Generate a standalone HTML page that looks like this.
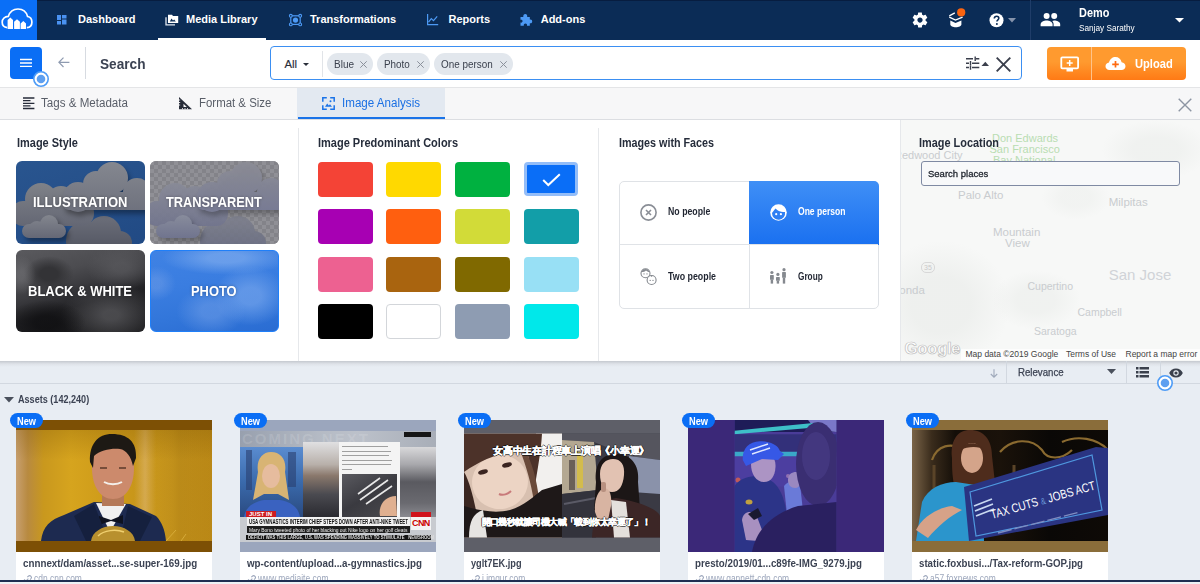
<!DOCTYPE html>
<html><head><meta charset="utf-8">
<style>
*{box-sizing:border-box;margin:0;padding:0}
html,body{width:1200px;height:584px;overflow:hidden}
body{position:relative;font-family:"Liberation Sans",sans-serif;background:#e8edf3;color:#3c4353}
.a{position:absolute}
.t{position:absolute;white-space:nowrap;line-height:1;transform-origin:0 0}
svg{position:absolute;overflow:visible}
.hdr{left:0;top:0;width:1200px;height:40px;background:#0b2c56;border-top:1px solid #071d40}
.nav{font-size:11px;font-weight:bold;color:#fff;top:13.7px}
.chip{position:absolute;top:53px;height:21.5px;border-radius:11px;background:#e2e7ed}
.tab{font-size:12.5px;color:#595e68;top:97.2px}
.ptitle{font-size:12px;font-weight:bold;color:#262d3b;top:137.3px}
.tile{position:absolute;width:129px;height:82.4px;border-radius:6px;overflow:hidden}
.tt{font-size:14.5px;font-weight:bold;color:#fff;text-shadow:0 0 3px rgba(0,0,0,.35)}
.sw{position:absolute;width:55px;height:35px;border-radius:4px}
.ft{font-size:10px;font-weight:bold;color:#1f2430;margin-top:.7px}
.card{position:absolute;top:420px;width:196px;height:164px;background:#fff;overflow:hidden}
.img{position:absolute;left:0;top:0;width:196px;height:131.7px;overflow:hidden}
.fn{font-size:10px;font-weight:bold;color:#3c4353;top:139.3px;left:7px}
.dom{font-size:10px;color:#9ea8bd;top:153.6px;left:18px;transform:scaleX(.845)}
.new{position:absolute;top:413.3px;width:33px;height:15px;border-radius:8px;background:#0a6ef5}
.newt{font-size:10px;font-weight:bold;color:#fff;top:417px}
.ml{font-size:11px;color:#c9cccf}
</style></head><body>

<!-- ============ HEADER ============ -->
<div class="a hdr"></div>
<div class="a" style="left:0;top:0;width:37px;height:40px;background:#0a6ff7"></div>
<svg style="left:0;top:0" width="37" height="40" viewBox="0 0 37 40">
<path d="M7.2 27.6 C4 27.2 2.2 24.8 2.2 22.2 C2.2 19 4.8 16.6 8.3 16.4 C9.8 11.8 13.6 9 18 9 C22.8 9 26.4 12.2 27.6 16.5 C30.2 16.9 31.9 19.4 31.9 22.2 C31.9 25.2 29.8 27.4 26.8 27.7" fill="none" stroke="#fff" stroke-width="1.7"/>
<path d="M7.6 28.9 V20 L10.3 17.5 L13 20 V28.9Z M14.1 28.9 V21.7 L17 19.2 L19.9 21.7 V28.9Z M20.6 28.9 V23.4 L23.3 21 L26 23.4 V28.9Z" fill="#fff"/>
</svg>

<svg style="left:57px;top:15px" width="10" height="10" viewBox="0 0 10 10"><path d="M0 0h4v5H0z M5 0h4.5v3.5H5z M0 6h4v3.5H0z M5 4.5h4.5v5H5z" fill="#4a92f2"/></svg>
<div class="t nav" style="left:78px">Dashboard</div>

<svg style="left:165px;top:14px" width="14" height="12" viewBox="0 0 14 12"><path d="M1 3.2 V10.8 H10" fill="none" stroke="#dfe5ee" stroke-width="1.3"/><path d="M3 0.8 H7 L8 2 H13.2 V9 H3Z" fill="#fff"/><path d="M4.8 7.6 L6.5 4.6 L8 6.6 L9.2 5.5 L10.8 7.6Z" fill="#0b2c56"/></svg>
<div class="t nav" style="left:186px">Media Library</div>
<div class="a" style="left:158px;top:38px;width:108px;height:2px;background:#fff"></div>

<svg style="left:289px;top:14px" width="13" height="12" viewBox="0 0 13 12"><rect x="1.8" y="1.8" width="9.4" height="8.6" fill="none" stroke="#4d9af5" stroke-width="1.2"/><circle cx="1.8" cy="1.8" r="1.4" fill="#0b2c56" stroke="#4d9af5" stroke-width="1.1"/><circle cx="11.2" cy="1.8" r="1.4" fill="#0b2c56" stroke="#4d9af5" stroke-width="1.1"/><circle cx="1.8" cy="10.4" r="1.4" fill="#0b2c56" stroke="#4d9af5" stroke-width="1.1"/><circle cx="11.2" cy="10.4" r="1.4" fill="#0b2c56" stroke="#4d9af5" stroke-width="1.1"/><circle cx="6.5" cy="6.1" r="2.6" fill="#4d9af5"/></svg>
<div class="t nav" style="left:310px">Transformations</div>

<svg style="left:427px;top:14px" width="12" height="12" viewBox="0 0 12 12"><path d="M0.6 0 V10.6 H11.2" fill="none" stroke="#4d9af5" stroke-width="1.2"/><path d="M1.5 8.2 L4.3 4.6 L6.5 6.6 L10.2 2.4" fill="none" stroke="#4d9af5" stroke-width="1.2"/></svg>
<div class="t nav" style="left:448.5px">Reports</div>

<svg style="left:520px;top:14px" width="12" height="12" viewBox="0 0 12 12"><path d="M0.5 3 H3.3 C3 1 4 0 5.3 0 C6.6 0 7.5 1 7.2 3 H9.8 V5.6 C11.6 5.3 12.2 6.4 12.2 7.4 C12.2 8.5 11.5 9.5 9.8 9.2 V11.8 H7 C7.3 10.3 6.5 9.6 5.5 9.6 C4.5 9.6 3.5 10.3 3.8 11.8 H0.5 V8.6 C2 8.9 2.6 8 2.6 7.1 C2.6 6.2 2 5.4 0.5 5.7Z" fill="#4d9af5"/></svg>
<div class="t nav" style="left:540.7px">Add-ons</div>

<!-- header right -->
<svg style="left:910.5px;top:10.5px" width="18" height="18" viewBox="0 0 24 24"><path fill="#fff" d="M19.4 13c.04-.3.06-.65.06-1s-.02-.7-.06-1l2.1-1.65c.2-.15.25-.42.12-.64l-2-3.46c-.12-.22-.39-.3-.61-.22l-2.49 1c-.52-.4-1.08-.73-1.69-.98l-.38-2.65C14.46 2.18 14.25 2 14 2h-4c-.25 0-.46.18-.49.42l-.38 2.65c-.61.25-1.17.59-1.69.98l-2.49-1c-.23-.09-.49 0-.61.22l-2 3.46c-.13.22-.07.49.12.64L4.57 11c-.04.3-.07.65-.07 1s.02.7.07 1l-2.11 1.65c-.19.15-.24.42-.12.64l2 3.46c.12.22.39.3.61.22l2.49-1c.52.4 1.08.73 1.69.98l.38 2.65c.03.24.24.42.49.42h4c.25 0 .46-.18.49-.42l.38-2.65c.61-.25 1.17-.59 1.69-.98l2.49 1c.23.09.49 0 .61-.22l2-3.46c.12-.22.07-.49-.12-.64L19.4 13zM12 15.5c-1.93 0-3.5-1.57-3.5-3.5s1.57-3.5 3.5-3.5 3.5 1.57 3.5 3.5-1.57 3.5-3.5 3.5z"/></svg>
<svg style="left:949px;top:12px" width="16" height="16" viewBox="0 0 16 16"><path d="M0.3 3.9L5.8 0.9M0.3 5.1L6.5 8.1L13.6 5.1" fill="none" stroke="#fff" stroke-width="1.3"/><path d="M1.3 8.6L6.5 11.1L12.4 8.6V12.6C12.4 14.1 9.8 15.3 6.9 15.3C4 15.3 1.3 14.1 1.3 12.6Z" fill="#fff"/><circle cx="12.2" cy="0.4" r="4.1" fill="#fb6410"/></svg>
<svg style="left:988.5px;top:13px" width="15" height="15" viewBox="0 0 15 15"><circle cx="7.5" cy="7.3" r="7" fill="#fff"/><path d="M5.3 5.6 C5.3 4.2 6.3 3.3 7.6 3.3 C8.9 3.3 9.8 4.2 9.8 5.3 C9.8 6.8 7.9 6.9 7.9 8.6" fill="none" stroke="#0b2c56" stroke-width="1.6"/><circle cx="7.9" cy="10.9" r="1" fill="#0b2c56"/></svg>
<svg style="left:1008px;top:18px" width="8" height="5" viewBox="0 0 8 5"><path d="M0 0H8L4 4.5Z" fill="#8593ab"/></svg>
<div class="a" style="left:1029.5px;top:0;width:1px;height:40px;background:#1f3d69"></div>
<svg style="left:1040px;top:13px" width="21" height="14" viewBox="0 0 21 14"><circle cx="6.6" cy="3.1" r="3" fill="#fff"/><circle cx="14.2" cy="3.1" r="3" fill="#fff"/><path d="M0.6 13.2 V11.4 C0.6 8.8 4 7.5 6.6 7.5 C9.2 7.5 12.6 8.8 12.6 11.4 V13.2Z" fill="#fff"/><path d="M13.6 13.2 V11.3 C13.6 10 13.1 9 12.3 8.1 C12.9 7.8 13.6 7.6 14.2 7.6 C16.7 7.6 20.2 8.8 20.2 11.3 V13.2Z" fill="#fff"/></svg>
<div class="t" style="left:1079px;top:7.1px;font-size:12px;font-weight:bold;color:#fff;transform:scaleX(.91)">Demo</div>
<div class="t" style="left:1078.7px;top:23.6px;font-size:9px;color:#fff;transform:scaleX(.913)">Sanjay Sarathy</div>
<svg style="left:1175px;top:18px" width="9" height="5" viewBox="0 0 9 5"><path d="M0 0H9L4.5 4.6Z" fill="#fff"/></svg>

<!-- ============ TOOLBAR ============ -->
<div class="a" style="left:0;top:40px;width:1200px;height:47px;background:#fff"></div>
<div class="a" style="left:10px;top:47px;width:32px;height:32px;border-radius:4px;background:#0a6ef5"></div>
<svg style="left:20px;top:58px" width="12" height="9" viewBox="0 0 12 9"><path d="M0 1.5H12M0 5H12M0 8.4H12" stroke="#fff" stroke-width="1.4"/></svg>
<svg style="left:33px;top:71px" width="16" height="16" viewBox="0 0 16 16"><circle cx="8" cy="8" r="7.2" fill="#fff" stroke="#4d9bf6" stroke-width="1.6"/><circle cx="8" cy="8" r="4.3" fill="#5d9ff0"/></svg>
<svg style="left:58px;top:57px" width="12" height="11" viewBox="0 0 12 11"><path d="M11.4 5.3H1M5.5 0.6L0.9 5.3L5.5 10" fill="none" stroke="#8e9ab0" stroke-width="1.2"/></svg>
<div class="a" style="left:85px;top:47px;width:1px;height:32px;background:#d7dbe1"></div>
<div class="t" style="left:99.5px;top:55.8px;font-size:15px;font-weight:bold;color:#3c4353;transform:scaleX(.909)">Search</div>

<div class="a" style="left:270px;top:46px;width:752px;height:34px;border:1.5px solid #3b8ff2;border-radius:4px;background:#fff"></div>
<div class="t" style="left:284.5px;top:58.6px;font-size:11.3px;color:#2a2f3a;-webkit-text-stroke:.15px #2a2f3a">All</div>
<svg style="left:303px;top:63px" width="6" height="3" viewBox="0 0 6 3"><path d="M0 0H6L3 3Z" fill="#2a2f3a"/></svg>
<div class="a" style="left:322px;top:51px;width:1px;height:26px;background:#e1e4e8"></div>
<div class="chip" style="left:327.3px;width:45.7px"></div>
<div class="t" style="left:333.5px;top:58.6px;font-size:10.5px;color:#3a404d;transform:scaleX(.952)">Blue</div>
<svg style="left:360px;top:61px" width="7" height="7" viewBox="0 0 7 7"><path d="M0.3 0.3L6.7 6.7M6.7 0.3L0.3 6.7" stroke="#8a909b" stroke-width="1"/></svg>
<div class="chip" style="left:377.3px;width:52.7px"></div>
<div class="t" style="left:384.2px;top:58.6px;font-size:10.5px;color:#3a404d;transform:scaleX(.94)">Photo</div>
<svg style="left:417px;top:61px" width="7" height="7" viewBox="0 0 7 7"><path d="M0.3 0.3L6.7 6.7M6.7 0.3L0.3 6.7" stroke="#8a909b" stroke-width="1"/></svg>
<div class="chip" style="left:434.2px;width:78.5px"></div>
<div class="t" style="left:440.8px;top:58.6px;font-size:10.5px;color:#3a404d;transform:scaleX(.942)">One person</div>
<svg style="left:500px;top:61px" width="7" height="7" viewBox="0 0 7 7"><path d="M0.3 0.3L6.7 6.7M6.7 0.3L0.3 6.7" stroke="#8a909b" stroke-width="1"/></svg>

<svg style="left:966px;top:56px" width="24" height="14" viewBox="0 0 24 14"><path d="M0 2.7H7M10 2.7H13.3M0 7.2H3M6 7.2H13.3M0 11.5H3M6 11.5H13.3" stroke="#3a3f4c" stroke-width="1.4"/><path d="M9.2 0.5V5M4.5 5V9.4M4.5 9.7V13.8" stroke="#3a3f4c" stroke-width="1.4"/><path d="M15.5 10H23L19.3 5.8Z" fill="#3a3f4c"/></svg>
<svg style="left:996px;top:56.5px" width="15" height="15" viewBox="0 0 15 15"><path d="M0.7 0.7L14.3 14.3M14.3 0.7L0.7 14.3" stroke="#3a3f4c" stroke-width="1.9"/></svg>

<div class="a" style="left:1047px;top:46.5px;width:139px;height:33.5px;border-radius:4px;background:linear-gradient(#ff9a2f 0%,#ff9a2f 45%,#ff7a15 100%)"></div>
<div class="a" style="left:1091px;top:46.5px;width:1px;height:33.5px;background:#ffc38a"></div>
<svg style="left:1060px;top:56px" width="20" height="16" viewBox="0 0 20 16"><rect x="1.3" y="1.3" width="16.8" height="11" rx="1" fill="none" stroke="#fff" stroke-width="1.8"/><path d="M6.5 13H13V15.5H6.5Z" fill="#fff"/><path d="M9.7 4V10M6.7 7H12.7" stroke="#fff" stroke-width="1.5"/></svg>
<svg style="left:1105px;top:56px" width="21" height="15" viewBox="0 0 21 15"><path d="M4.5 14 C2 14 0.5 12.3 0.5 10.3 C0.5 8.3 2 6.8 4 6.6 C4.8 3 7.5 1 10.5 1 C13.5 1 16 3 16.6 6.2 C18.8 6.4 20.5 8 20.5 10.2 C20.5 12.4 18.8 14 16.5 14Z" fill="#fff"/><path d="M10.5 5V11.6M7.2 8.3H13.8" stroke="#ff6a10" stroke-width="1.7"/></svg>
<div class="t" style="left:1134.6px;top:58px;font-size:12px;font-weight:bold;color:#fff;transform:scaleX(.927)">Upload</div>

<!-- ============ TABS ============ -->
<div class="a" style="left:0;top:87px;width:1200px;height:33px;background:#f7f7f8;border-top:1px solid #e4e5e7;border-bottom:1px solid #dcdee2"></div>
<svg style="left:22.5px;top:97px" width="12" height="13" viewBox="0 0 12 13"><path d="M0 1H11.4M0 3.6H7.5M0 6.3H11.4M0 8.9H7.5M0 11.5H11.4" stroke="#262b38" stroke-width="1.3"/></svg>
<div class="t tab" style="left:41px;transform:scaleX(.927)">Tags &amp; Metadata</div>
<svg style="left:179px;top:97px" width="13" height="13" viewBox="0 0 13 13"><path d="M0 0 V12.3 H13Z" fill="#262b38"/><path d="M4.5 6.8 V10 H7.8Z" fill="#f7f7f8"/><path d="M0 3H1.2M0 5.5H1.2M0 8H1.2M3.5 12.3V11.1M6 12.3V11.1M8.5 12.3V11.1" stroke="#f7f7f8" stroke-width=".9"/></svg>
<div class="t tab" style="left:199px;transform:scaleX(.914)">Format &amp; Size</div>
<div class="a" style="left:297px;top:88px;width:148px;height:31px;background:#e3e9f1"></div>
<div class="a" style="left:297.5px;top:117.2px;width:147.5px;height:1.8px;background:#1a73e8"></div>
<svg style="left:322px;top:97px" width="13" height="13" viewBox="0 0 13 13"><path d="M0.8 4.8V0.8H4.8M8.2 0.8H12.2V4.8M12.2 8.2V12.2H8.2M4.8 12.2H0.8V8.2" fill="none" stroke="#1a73e8" stroke-width="1.5"/><path d="M3 9.7L5.2 6.6L6.8 8.4L8 7.2L10 9.7Z" fill="#1a73e8"/><circle cx="8.5" cy="4.3" r="1" fill="#1a73e8"/></svg>
<div class="t tab" style="left:342px;color:#1a6fe3;transform:scaleX(.928)">Image Analysis</div>
<svg style="left:1178px;top:98px" width="14" height="14" viewBox="0 0 14 14"><path d="M0.7 0.7L13.3 13.3M13.3 0.7L0.7 13.3" stroke="#8d95a3" stroke-width="1.4"/></svg>

<!-- ============ PANEL ============ -->
<div class="a" style="left:0;top:361px;width:1200px;height:6px;background:linear-gradient(#c5c9cf,#dfe3e9 50%,#e8edf3)"></div>
<div class="a" style="left:0;top:120px;width:1200px;height:241px;background:#fff"></div>
<div class="a" style="left:298px;top:128px;width:1px;height:233px;background:#e6e8eb"></div>
<div class="a" style="left:598px;top:128px;width:1px;height:233px;background:#e6e8eb"></div>

<div class="t ptitle" style="left:17.2px;transform:scaleX(.914)">Image Style</div>
<div class="t ptitle" style="left:317.7px;transform:scaleX(.917)">Image Predominant Colors</div>
<div class="t ptitle" style="left:618.5px;transform:scaleX(.896)">Images with Faces</div>

<svg width="0" height="0" style="left:0;top:0"><defs>
<g id="clA"><circle cx="62" cy="36" r="15"/><circle cx="80" cy="23" r="13"/><circle cx="96" cy="17" r="16"/><circle cx="121" cy="31" r="14"/><rect x="47" y="31" width="90" height="18" rx="6"/></g>
<g id="clB"><circle cx="25" cy="38" r="16"/><circle cx="45" cy="39" r="14"/><rect x="-5" y="40" width="83" height="25" rx="12"/></g>
<g id="clC"><circle cx="21" cy="68" r="8"/><circle cx="33" cy="63" r="9"/><rect x="6" y="63" width="44" height="14" rx="7"/></g>
<g id="clD"><circle cx="70" cy="80" r="20"/><circle cx="88" cy="72" r="17"/><circle cx="104" cy="82" r="12"/></g>
<filter id="blr" x="-20%" y="-20%" width="140%" height="140%"><feGaussianBlur stdDeviation="2.5"/></filter>
<linearGradient id="gA" gradientUnits="userSpaceOnUse" x1="0" y1="2" x2="0" y2="49"><stop offset="0" stop-color="#84878f"/><stop offset="1" stop-color="#6f727e"/></linearGradient>
<linearGradient id="gB" gradientUnits="userSpaceOnUse" x1="0" y1="20" x2="0" y2="65"><stop offset="0" stop-color="#808389"/><stop offset="1" stop-color="#646774"/></linearGradient>
<linearGradient id="gC" gradientUnits="userSpaceOnUse" x1="0" y1="54" x2="0" y2="77"><stop offset="0" stop-color="#83868e"/><stop offset="1" stop-color="#656876"/></linearGradient>
<linearGradient id="gD" gradientUnits="userSpaceOnUse" x1="0" y1="52" x2="0" y2="83"><stop offset="0" stop-color="#6e717c"/><stop offset="1" stop-color="#575a66"/></linearGradient>
<linearGradient id="tA" gradientUnits="userSpaceOnUse" x1="0" y1="2" x2="0" y2="49"><stop offset="0" stop-color="#8c8d96"/><stop offset="1" stop-color="#7a7d96"/></linearGradient>
<linearGradient id="tB" gradientUnits="userSpaceOnUse" x1="0" y1="20" x2="0" y2="65"><stop offset="0" stop-color="#8a8c98"/><stop offset="1" stop-color="#72758e"/></linearGradient>
<linearGradient id="tC" gradientUnits="userSpaceOnUse" x1="0" y1="54" x2="0" y2="77"><stop offset="0" stop-color="#888c9c"/><stop offset="1" stop-color="#70748e"/></linearGradient>
<linearGradient id="tD" gradientUnits="userSpaceOnUse" x1="0" y1="52" x2="0" y2="83"><stop offset="0" stop-color="#80828e"/><stop offset="1" stop-color="#6c7084"/></linearGradient>
<pattern id="chk" width="8" height="8" patternUnits="userSpaceOnUse"><rect width="8" height="8" fill="#838389"/><rect width="4" height="4" fill="#909096"/><rect x="4" y="4" width="4" height="4" fill="#909096"/></pattern>
</defs></svg>

<div class="tile" style="left:16px;top:161.3px;background:linear-gradient(160deg,#29558f,#214a84)"><svg style="left:0;top:0" width="129" height="83">
 <use href="#clD" fill="url(#gD)"/>
 <use href="#clB" fill="url(#gB)"/>
 <use href="#clC" fill="#000" opacity=".35" filter="url(#blr)" transform="translate(3,4)"/>
 <use href="#clC" fill="url(#gC)"/>
 <use href="#clA" fill="#000" opacity=".35" filter="url(#blr)" transform="translate(2,4)"/>
 <use href="#clA" fill="url(#gA)"/>
</svg></div>
<div class="tile" style="left:149.5px;top:161.3px;background:#939399"><svg style="left:0;top:0" width="129" height="83"><rect width="129" height="83" fill="url(#chk)"/>
 <use href="#clD" fill="url(#tD)" opacity=".9"/>
 <use href="#clB" fill="url(#tB)" opacity=".95"/>
 <use href="#clC" fill="#000" opacity=".25" filter="url(#blr)" transform="translate(3,4)"/>
 <use href="#clC" fill="url(#tC)"/>
 <use href="#clA" fill="#000" opacity=".25" filter="url(#blr)" transform="translate(2,4)"/>
 <use href="#clA" fill="url(#tA)" opacity=".95"/>
</svg></div>
<div class="tile" style="left:16px;top:250px;height:81.7px;background:linear-gradient(165deg,#5a5a5e 0%,#4c4c50 28%,#3a3a3e 45%,#222225 62%,#161618 100%)">
 <div class="a" style="left:40px;top:30px;width:110px;height:70px;border-radius:50%;background:radial-gradient(rgba(110,110,114,.55) 10%,rgba(100,100,104,0) 65%)"></div>
 <div class="a" style="left:70px;top:-5px;width:70px;height:45px;border-radius:50%;background:radial-gradient(rgba(95,95,99,.6) 15%,rgba(95,95,99,0) 70%)"></div>
 <div class="a" style="left:8px;top:6px;width:50px;height:36px;border-radius:50%;background:radial-gradient(#333336 25%,rgba(51,51,54,0) 70%)"></div>
 <div class="a" style="left:-10px;top:5px;width:30px;height:40px;border-radius:50%;background:radial-gradient(rgba(120,120,124,.5) 15%,rgba(120,120,124,0) 70%)"></div>
 <div class="a" style="left:-10px;top:50px;width:80px;height:45px;border-radius:50%;background:radial-gradient(rgba(10,10,12,.6) 20%,rgba(10,10,12,0) 70%)"></div>
</div>
<div class="tile" style="left:149.5px;top:250px;height:81.7px;background:linear-gradient(170deg,#3f82e4 0%,#3a7de0 40%,#3276da 70%,#2a6cd2 100%);border:1.5px solid #1f7ff9">
 <div class="a" style="left:10px;top:-10px;width:130px;height:34px;border-radius:50%;background:radial-gradient(rgba(135,178,240,.6) 20%,rgba(135,178,240,0) 70%)"></div>
 <div class="a" style="left:62px;top:15px;width:75px;height:60px;border-radius:50%;background:radial-gradient(rgba(125,170,238,.6) 20%,rgba(125,170,238,0) 70%)"></div>
 <div class="a" style="left:25px;top:35px;width:70px;height:50px;border-radius:50%;background:radial-gradient(rgba(115,160,232,.5) 20%,rgba(115,160,232,0) 70%)"></div>
 <div class="a" style="left:-15px;top:15px;width:40px;height:35px;border-radius:50%;background:radial-gradient(rgba(115,160,232,.45) 20%,rgba(115,160,232,0) 70%)"></div>
</div>
<div class="t tt" style="left:32.8px;top:195.3px;transform:scaleX(.897)">ILLUSTRATION</div>
<div class="t tt" style="left:166px;top:195.3px;transform:scaleX(.883)">TRANSPARENT</div>
<div class="t tt" style="left:28.4px;top:284px;transform:scaleX(.897)">BLACK &amp; WHITE</div>
<div class="t tt" style="left:191.2px;top:284px;transform:scaleX(.889)">PHOTO</div>

<!-- colors -->
<div class="sw" style="left:317.5px;top:161.5px;background:#f44336"></div>
<div class="sw" style="left:386px;top:161.5px;background:#ffd900"></div>
<div class="sw" style="left:455px;top:161.5px;background:#00b140"></div>
<div class="sw" style="left:524.2px;top:161.8px;width:53.7px;height:34.7px;background:#0a6ef7;border:3px solid #93bdf8;border-radius:4px"></div>
<svg style="left:542px;top:172.5px" width="19" height="14" viewBox="0 0 19 14"><path d="M1.2 7 L6.3 12 L17.8 1.2" fill="none" stroke="#fff" stroke-width="2"/></svg>
<div class="sw" style="left:317.5px;top:209px;background:#a700b3"></div>
<div class="sw" style="left:386px;top:209px;background:#ff5f0f"></div>
<div class="sw" style="left:455px;top:209px;background:#d2db38"></div>
<div class="sw" style="left:524px;top:209px;background:#129ea8"></div>
<div class="sw" style="left:317.5px;top:257px;background:#ed6191"></div>
<div class="sw" style="left:386px;top:257px;background:#a9640f"></div>
<div class="sw" style="left:455px;top:257px;background:#806900"></div>
<div class="sw" style="left:524px;top:257px;background:#98e0f5"></div>
<div class="sw" style="left:317.5px;top:304px;background:#000"></div>
<div class="sw" style="left:386px;top:304px;background:#fff;border:1px solid #d3d6da"></div>
<div class="sw" style="left:455px;top:304px;background:#8e9cb2"></div>
<div class="sw" style="left:524px;top:304px;background:#00e8ea"></div>

<!-- faces -->
<div class="a" style="left:618.5px;top:180.5px;width:260.5px;height:128px;border:1px solid #dfe2e6;border-radius:5px;background:#fff"></div>
<div class="a" style="left:749.4px;top:180.5px;width:129.6px;height:64px;border-radius:0 5px 0 0;background:linear-gradient(#3f8ff6,#1a70f0)"></div>
<div class="a" style="left:749px;top:244px;width:1px;height:64.5px;background:#e0e3e7"></div>
<div class="a" style="left:619px;top:244px;width:259px;height:1px;background:#e0e3e7"></div>
<svg style="left:639.5px;top:204px" width="18" height="18" viewBox="0 0 18 18"><circle cx="8.5" cy="8.5" r="7.6" fill="none" stroke="#8a8e96" stroke-width="1.6"/><path d="M6 6L11 11M11 6L6 11" stroke="#8a8e96" stroke-width="1.6"/></svg>
<div class="t ft" style="left:668.4px;top:206.3px;transform:scaleX(.877)">No people</div>
<svg style="left:769.5px;top:204px" width="18" height="18" viewBox="0 0 18 18"><circle cx="8.5" cy="8.5" r="8.3" fill="#fff"/><path d="M2 9 L5.4 4.4 L7.9 6.4 C10 7.5 12.4 7.9 15 8 A6.55 6.55 0 1 1 2 9Z" fill="#2f7ff3"/><circle cx="6.2" cy="10.2" r="1.1" fill="#fff"/><circle cx="10.9" cy="10.2" r="1.1" fill="#fff"/></svg>
<div class="t ft" style="left:798.3px;top:206.3px;color:#fff;transform:scaleX(.855)">One person</div>
<svg style="left:639.5px;top:268px" width="18" height="18" viewBox="0 0 18 18"><circle cx="5.5" cy="5.3" r="4.5" fill="#fff" stroke="#85898f" stroke-width="1.1"/><path d="M1.6 4 C2.5 1.8 4 1 5.5 1 C7.5 1 9 2 9.6 4 C8 3.8 6.8 3.2 6 2.4 C5 3.4 3.4 4 1.6 4Z" fill="#85898f"/><path d="M4 5.2V6.6M7 5.2V6.6" stroke="#85898f" stroke-width=".9"/><circle cx="11.6" cy="12" r="4.5" fill="#fff" stroke="#85898f" stroke-width="1.1"/><circle cx="10.2" cy="12.4" r=".65" fill="#85898f"/><circle cx="13" cy="12.4" r=".65" fill="#85898f"/><path d="M11.6 7.6V9" stroke="#85898f" stroke-width=".8"/></svg>
<div class="t ft" style="left:667.6px;top:271px;transform:scaleX(.885)">Two people</div>
<svg style="left:769px;top:268px" width="18" height="17" viewBox="0 0 18 17"><g fill="#85898f"><circle cx="2.9" cy="4.5" r="1.6"/><rect x="1" y="7" width="3.8" height="4.8" rx=".6"/><rect x="1.7" y="11.5" width="2.4" height="4.1"/><circle cx="8.9" cy="6.4" r="1.6"/><rect x="7" y="9" width="3.8" height="3.8" rx=".6"/><rect x="7.7" y="12.6" width="2.4" height="3"/><circle cx="15" cy="1.7" r="1.6"/><rect x="13.1" y="4" width="3.8" height="5.8" rx=".6"/><rect x="13.8" y="9.5" width="2.4" height="6.1"/></g></svg>
<div class="t ft" style="left:798.3px;top:271px;transform:scaleX(.823)">Group</div>

<!-- map -->
<div class="a" style="left:901px;top:120px;width:299px;height:241px;background:#f7f8f7;overflow:hidden">
 <div class="a" style="left:-30px;top:120px;width:140px;height:130px;border-radius:45%;background:radial-gradient(rgba(236,238,236,.8) 30%,rgba(236,238,236,0) 70%)"></div>
 <div class="a" style="left:90px;top:150px;width:90px;height:60px;border-radius:45%;background:radial-gradient(rgba(237,239,237,.7) 30%,rgba(237,239,237,0) 70%)"></div>
 <div class="a" style="left:200px;top:0;width:110px;height:60px;border-radius:45%;background:radial-gradient(rgba(237,239,237,.7) 30%,rgba(237,239,237,0) 70%)"></div>
 <div class="a" style="left:140px;top:55px;width:70px;height:45px;border-radius:45%;background:radial-gradient(rgba(238,240,238,.6) 30%,rgba(238,240,238,0) 70%)"></div>
 <div class="t ml" style="left:91px;top:13px;color:#b9ddb2;font-size:11px">Don Edwards</div>
 <div class="t ml" style="left:88.5px;top:24px;color:#b9ddb2;font-size:11px">San Francisco</div>
 <div class="t ml" style="left:92px;top:35px;color:#b9ddb2;font-size:11px">Bay National</div>
 <div class="t ml" style="left:-7px;top:30px;font-size:11px">Redwood City</div>
 <div class="t ml" style="left:57px;top:69.5px;font-size:11.5px">Palo Alto</div>
 <div class="t ml" style="left:207.7px;top:76.5px;font-size:11.5px">Milpitas</div>
 <div class="t ml" style="left:92px;top:106.5px;font-size:11.5px">Mountain</div>
 <div class="t ml" style="left:104px;top:118px;font-size:11.5px">View</div>
 <div class="a" style="left:20px;top:142px;width:14px;height:11px;border-radius:5px;border:1px solid #d8d8d8;font-size:7px;color:#c9c9c9;text-align:center;line-height:9px">35</div>
 <div class="t ml" style="left:-10px;top:164.5px;font-size:11.5px">Honda</div>
 <div class="t ml" style="left:207.7px;top:147px;font-size:15px;color:#d0d3d7">San Jose</div>
 <div class="t ml" style="left:126.5px;top:160.5px;font-size:10.5px">Cupertino</div>
 <div class="t ml" style="left:176.5px;top:187px;font-size:10.5px">Campbell</div>
 <div class="t ml" style="left:133px;top:206px;font-size:10.5px">Saratoga</div>
</div>
<div class="a" style="left:900px;top:120px;width:1px;height:241px;background:#e6e8eb"></div>
<div class="t ptitle" style="left:919.4px;transform:scaleX(.909)">Image Location</div>
<div class="a" style="left:920.5px;top:161.2px;width:259px;height:24.5px;border:1px solid #7f8aa3;border-radius:3px;background:#f8f9fa"></div>
<div class="t" style="left:927.5px;top:169.3px;font-size:9.8px;color:#1e232c;-webkit-text-stroke:.3px #1e232c;transform:scaleX(.97)">Search places</div>
<div class="t" style="left:904.5px;top:339.5px;font-size:17px;font-weight:bold;color:#fff;-webkit-text-stroke:.7px #bdbdbd;letter-spacing:-.5px">Google</div>
<div class="a" style="left:961px;top:349px;width:239px;height:11px;background:rgba(255,255,255,.75)"></div>
<div class="t" style="left:965.5px;top:350.2px;font-size:8.5px;color:#444">Map data ©2019 Google</div>
<div class="t" style="left:1066px;top:350.2px;font-size:8.5px;color:#444">Terms of Use</div>
<div class="t" style="left:1125.5px;top:350.2px;font-size:8.5px;color:#444">Report a map error</div>

<!-- ============ SORT BAR ============ -->
<div class="a" style="left:0;top:383px;width:1200px;height:1px;background:#d2d8e0"></div>
<svg style="left:989.5px;top:369px" width="8" height="9" viewBox="0 0 8 9"><path d="M4 0.3V8.2M0.8 5L4 8.2L7.2 5" fill="none" stroke="#9fa9ba" stroke-width="1.1"/></svg>
<div class="a" style="left:1005.5px;top:361px;width:1px;height:22px;background:#d2d8e0"></div>
<div class="t" style="left:1018px;top:367.5px;font-size:10px;color:#3c4353;-webkit-text-stroke:.25px #3c4353;transform:scaleX(.965)">Relevance</div>
<svg style="left:1107px;top:369px" width="9" height="6" viewBox="0 0 9 6"><path d="M0 0H9L4.5 5Z" fill="#4a505c"/></svg>
<div class="a" style="left:1125.5px;top:361px;width:1px;height:22px;background:#d2d8e0"></div>
<svg style="left:1136px;top:367px" width="13" height="11" viewBox="0 0 13 11"><path d="M0 0h2.5v2.5H0zM3.5 0H13v2.5H3.5zM0 4h2.5v2.5H0zM3.5 4H13v2.5H3.5zM0 8h2.5v2.5H0zM3.5 8H13v2.5H3.5z" fill="#3a404c"/></svg>
<div class="a" style="left:1159.5px;top:361px;width:1px;height:22px;background:#d2d8e0"></div>
<svg style="left:1169px;top:368px" width="14" height="10" viewBox="0 0 14 10"><path d="M7 0.5C3.8 0.5 1.2 2.5 0.2 5C1.2 7.5 3.8 9.5 7 9.5C10.2 9.5 12.8 7.5 13.8 5C12.8 2.5 10.2 0.5 7 0.5Z" fill="#3a404c"/><circle cx="7" cy="5" r="2.7" fill="#e8edf3"/><circle cx="7" cy="5" r="1.6" fill="#3a404c"/></svg>
<svg style="left:1157px;top:375px" width="16" height="16" viewBox="0 0 16 16"><circle cx="8" cy="8" r="7.2" fill="#fff" stroke="#4d9bf6" stroke-width="1.6"/><circle cx="8" cy="8" r="4.3" fill="#5d9ff0"/></svg>

<svg style="left:4px;top:397px" width="10" height="6" viewBox="0 0 10 6"><path d="M0 0H10L5 5.5Z" fill="#4a505c"/></svg>
<div class="t" style="left:17.8px;top:394.1px;font-size:10.5px;font-weight:bold;color:#3c4353;transform:scaleX(.865)">Assets (142,240)</div>

<!-- ============ CARDS ============ -->
<!-- card 1 -->
<div class="card" style="left:16px">
 <div class="img" style="background:#7d5005">
  <div class="a" style="left:0;top:10px;width:196px;height:111px;background:linear-gradient(90deg,#c8a070 0%,#b88a40 6%,#c9981e 14%,#d6a41e 28%,#cf9c1a 45%,#c8961a 62%,#d2a020 80%,#c08e18 100%)"></div>
  <div class="a" style="left:118px;top:10px;width:22px;height:111px;background:linear-gradient(90deg,rgba(225,190,140,0),rgba(225,190,140,.45),rgba(225,190,140,0))"></div>
  <div class="a" style="left:130px;top:10px;width:66px;height:111px;background:linear-gradient(90deg,rgba(140,95,10,0),rgba(140,95,10,.3) 50%,rgba(150,100,10,.15))"></div><div class="a" style="left:0;top:10px;width:196px;height:30px;background:linear-gradient(rgba(120,80,0,.25),rgba(120,80,0,0))"></div>
  <svg style="left:0;top:0" width="196" height="132" viewBox="0 0 196 132">
   <path d="M25 121 C27 106 34 100 48 95 L78 82 L114 84 L140 96 C146 102 149 110 150 121Z" fill="#1d2a50"/>
   <path d="M80 83 L94 112 L110 84Z" fill="#f0f0f0"/>
   <path d="M83 96 L95 100 L107 95 L107 104 L95 101 L83 105Z" fill="#0e1220"/>
   <path d="M58 96 L78 84 L92 120 L70 121Z" fill="#15203e"/>
   <path d="M136 97 L112 86 L104 121 L124 121Z" fill="#15203e"/>
   <rect x="86" y="70" width="22" height="16" fill="#b47858"/>
   <path d="M76 48 C76 32 84 24 97 24 C110 24 118 32 118 48 C118 66 110 79 97 79 C84 79 76 66 76 48Z" fill="#cc8a6c"/>
   <path d="M74 42 C73 24 82 14 96 14 C112 14 121 22 120 38 L117 46 C115 36 110 30 104 29 C96 28 84 30 78 36 L77 48Z" fill="#1d1914"/>
   <path d="M88 62 C93 65 101 65 106 62" fill="none" stroke="#f4f0ea" stroke-width="2"/><path d="M84 48h7M103 48h7" stroke="#5a3a2a" stroke-width="1.5"/>
   <path d="M75 121 C76 112 86 106 97 106 C108 106 118 112 119 121Z" fill="#b8902e"/><path d="M82 116 C88 110 100 109 108 112" stroke="#f0d070" stroke-width="1.5" fill="none"/><path d="M150 121 L160 110 M165 121 L170 114" stroke="#e8c050" stroke-width="1" opacity=".6"/>
  </svg>
 </div>
 <div class="t fn" style="transform:scaleX(.979)">cnnnext/dam/asset...se-super-169.jpg</div>
 <div class="t dom">cdn.cnn.com</div><svg style="left:7px;top:154.8px" width="9" height="9" viewBox="0 0 9 9"><path d="M3.6 5.4L5.4 3.6M4.3 2.2L5.2 1.3C6 .5 7.2 .5 8 1.3C8.6 2 8.6 3 8 3.7L7 4.7M4.7 6.8L3.8 7.7C3 8.5 1.8 8.5 1 7.7C.4 7 .4 6 1 5.3L2 4.3" fill="none" stroke="#9ea8bd" stroke-width="1.1"/></svg>
</div>
<!-- card 2 -->
<div class="card" style="left:240px">
 <div class="img" style="background:#9ba6bd">
  <div class="a" style="left:0;top:10.5px;width:196px;height:111px;background:#c8cbd0"></div>
  <div class="a" style="left:0;top:10.5px;width:196px;height:17px;background:linear-gradient(90deg,#98a0ae,#b4bac4 40%,#bcc1ca 60%,#a8aeb8)"></div>
  <div class="t" style="left:2px;top:11px;font-size:15px;font-weight:bold;color:rgba(255,255,255,.13);letter-spacing:2px">COMING NEXT</div>
  <div class="a" style="left:163.5px;top:12px;width:27px;height:5px;background:#161616"></div>
  <div class="a" style="left:0;top:27px;width:63px;height:70px;background:linear-gradient(#5a8cd0 0%,#3a6aac 50%,#2a4a80 100%)"></div>
  <div class="a" style="left:6px;top:30px;width:6px;height:40px;background:#2a4070;opacity:.6"></div>
  <div class="a" style="left:48px;top:32px;width:8px;height:35px;background:#2a4070;opacity:.6"></div>
  <div class="a" style="left:63px;top:22px;width:36px;height:75px;background:linear-gradient(#e0e0e2 0%,#b8b0aa 30%,#8a786c 45%,#4a4a50 70%,#2a2a30 100%)"></div>
  <div class="a" style="left:99px;top:22px;width:61px;height:75px;background:#f4f4f4"></div>
  <div class="a" style="left:102px;top:26px;width:46px;height:1.3px;background:#a0a0a0"></div>
  <div class="a" style="left:102px;top:30.5px;width:49px;height:1.3px;background:#a0a0a0"></div>
  <div class="a" style="left:102px;top:35px;width:47px;height:1.3px;background:#a0a0a0"></div>
  <div class="a" style="left:102px;top:39.5px;width:50px;height:1.3px;background:#a0a0a0"></div>
  <div class="a" style="left:102px;top:44px;width:49px;height:1.3px;background:#a0a0a0"></div>
  <div class="a" style="left:102px;top:48.5px;width:10px;height:1.3px;background:#a0a0a0"></div>
  <div class="a" style="left:102px;top:54px;width:55px;height:43px;background:linear-gradient(150deg,#5a5a60,#3a3a40 50%,#4a4a4e)"></div>
  <div class="a" style="left:160px;top:27px;width:36px;height:70px;background:linear-gradient(#d8d8da 0%,#a8a8ac 25%,#5a5a60 50%,#6a6a70 80%,#8a8a90 100%)"></div>
  <svg style="left:0;top:0" width="196" height="132" viewBox="0 0 196 132">
   <path d="M4 97 C6 86 14 82 24 80 L40 80 C50 82 58 86 60 97Z" fill="#3a62c0"/>
   <path d="M18 52 C16 40 22 32 31 32 C41 32 47 40 45 52 L49 80 L38 74 L24 74 L13 80Z" fill="#d8b474"/>
   <ellipse cx="31" cy="56" rx="9" ry="12" fill="#e6bc9e"/>
   <path d="M120 80 L148 60 M126 84 L152 66 M118 74 L140 58" stroke="#e8e8e8" stroke-width="1.6"/>
   <path d="M140 96 C138 84 146 76 156 76 L157 96Z" fill="#e0b090"/>
  </svg>
  <div class="a" style="left:6px;top:91px;width:30px;height:6px;background:#cc1c22"></div>
  <div class="t" style="left:9px;top:91px;font-size:6px;font-weight:bold;color:#fff">JUST IN</div>
  <div class="a" style="left:7px;top:96.5px;width:163px;height:9.5px;background:#f2f2f2"></div>
  <div class="t" style="left:9px;top:98px;font-size:7px;font-weight:bold;color:#111;transform:scaleX(.625)">USA GYMNASTICS INTERIM CHIEF STEPS DOWN AFTER ANTI-NIKE TWEET</div>
  <div class="a" style="left:7px;top:106px;width:163px;height:7px;background:#1e1e1e"></div>
  <div class="t" style="left:9px;top:106.5px;font-size:6px;color:#eee;transform:scaleX(.82)">Mary Bono tweeted photo of her blacking out Nike logo on her golf cleats</div>
  <div class="a" style="left:5.5px;top:114.5px;width:185px;height:5.5px;background:#141414"></div>
  <div class="t" style="left:8px;top:114.8px;font-size:5px;font-weight:bold;color:#ddd;transform:scaleX(.85)">DEFICIT WAS THIS LARGE, U.S. WAS SPENDING MASSIVELY TO STIMULATE &nbsp; NEWSROOM</div>
  <div class="a" style="left:170.5px;top:92px;width:20px;height:4.5px;background:#d0141c"></div>
  <div class="a" style="left:170.5px;top:96.5px;width:20px;height:13px;background:#f4f4f4"></div>
  <div class="t" style="left:172px;top:98.5px;font-size:9px;font-weight:bold;color:#cc0000;letter-spacing:-.6px">CNN</div>
 </div>
 <div class="t fn" style="transform:scaleX(.978)">wp-content/upload...a-gymnastics.jpg</div>
 <div class="t dom">www.mediaite.com</div><svg style="left:7px;top:154.8px" width="9" height="9" viewBox="0 0 9 9"><path d="M3.6 5.4L5.4 3.6M4.3 2.2L5.2 1.3C6 .5 7.2 .5 8 1.3C8.6 2 8.6 3 8 3.7L7 4.7M4.7 6.8L3.8 7.7C3 8.5 1.8 8.5 1 7.7C.4 7 .4 6 1 5.3L2 4.3" fill="none" stroke="#9ea8bd" stroke-width="1.1"/></svg>
</div>
<!-- card 3 -->
<div class="card" style="left:464px">
 <div class="img" style="background:#5e5f68">
  <div class="a" style="left:0;top:13.7px;width:98px;height:103.8px;background:#e8d4c8"></div>
  <svg style="left:0;top:0" width="196" height="132" viewBox="0 0 196 132">
   <rect x="0" y="13.7" width="98" height="103.8" fill="#d8c0b0"/>
   <rect x="72" y="13.7" width="26" height="60" fill="#f2f0ee"/>
   <ellipse cx="36" cy="62" rx="28" ry="27" fill="#ecd4c4" transform="rotate(-12 36 62)"/>
   <path d="M0 13.7 H78 C77 32 73 52 71 66 C67 50 65 38 62 28 C45 30 20 38 0 52Z" fill="#4c3229"/>
   <path d="M0 52 C6 62 10 80 14 100 L0 112Z" fill="#3a2620"/>
   <path d="M60 28 C68 42 73 60 75 80 L70 82 C67 62 62 46 56 30Z" fill="#6a4a3a"/>
   <ellipse cx="19" cy="52" rx="5" ry="2.3" fill="#3a2420" transform="rotate(-14 19 52)"/>
   <ellipse cx="43" cy="45" rx="5" ry="2.3" fill="#3a2420" transform="rotate(-14 43 45)"/>
   <path d="M35 74 C39 76 44 74 47 71" stroke="#c87a7a" stroke-width="2" fill="none"/>
   <path d="M0 117.5 V86 C14 90 30 94 46 90 C60 86 70 76 78 70 L98 64 V117.5Z" fill="#1e1818"/>
   <path d="M5 117.5 C5 102 9 93 19 90 L23 117.5Z" fill="#e6e4e2"/>
   <rect x="98" y="13.7" width="98" height="103.8" fill="#3a3a44"/>
   <path d="M98 13.7 H196 V40 L165 36 L130 22 L98 20Z" fill="#55555e"/>
   <path d="M98 20 L130 22 L134 70 L98 74Z" fill="#b4a892"/>
   <rect x="113" y="32" width="6" height="36" fill="#d8c040" opacity=".85"/>
   <rect x="105" y="40" width="6" height="30" fill="#6a6058"/>
   <path d="M165 36 L196 40 V74 L168 72Z" fill="#8a92aa"/>
   <path d="M98 74 L134 70 L132 117.5 H98Z" fill="#33333c"/>
   <path d="M100 84 L132 78" stroke="#5a5a66" stroke-width="2"/>
   <path d="M132 62 C130 44 138 34 152 34 C166 34 176 44 174 62 L176 90 L130 90Z" fill="#1c1616"/>
   <path d="M136 54 C136 44 142 39 149 39 C157 39 161 45 160 55 C159 66 155 72 148 72 C140 72 136 64 136 54Z" fill="#e2c2b2"/>
   <path d="M128 117.5 C129 96 138 80 152 78 C168 80 194 88 196 96 V117.5Z" fill="#3c2626"/>
   <path d="M147 80 L150 117.5 L166 117.5 L162 82Z" fill="#e4e0dc"/>
   <path d="M131 92 C130 80 134 70 140 68 C146 68 148 76 147 86 L144 100 L134 100Z" fill="#d8b4a2"/>
   <rect x="137" y="62" width="5" height="10" rx="2" fill="#b89080"/>
  </svg>
  <div class="t" style="left:29px;top:25.5px;font-size:9.5px;font-weight:bold;color:#fff;-webkit-text-stroke:.45px #fff;text-shadow:1px 0 0 #111,-1px 0 0 #111,0 1px 0 #111,0 -1px 0 #111;letter-spacing:-.25px">女高中生在計程車上演唱《小幸運》</div>
  <div class="t" style="left:17.5px;top:98px;font-size:8.6px;font-weight:bold;color:#fff;-webkit-text-stroke:.45px #fff;text-shadow:1px 0 0 #111,-1px 0 0 #111,0 1px 0 #111,0 -1px 0 #111;letter-spacing:-.55px">開口幾秒就讓司機大喊「載到你太幸運了」！</div>
 </div>
 <div class="t fn" style="transform:scaleX(.92)">yglt7EK.jpg</div>
 <div class="t dom">i.imgur.com</div><svg style="left:7px;top:154.8px" width="9" height="9" viewBox="0 0 9 9"><path d="M3.6 5.4L5.4 3.6M4.3 2.2L5.2 1.3C6 .5 7.2 .5 8 1.3C8.6 2 8.6 3 8 3.7L7 4.7M4.7 6.8L3.8 7.7C3 8.5 1.8 8.5 1 7.7C.4 7 .4 6 1 5.3L2 4.3" fill="none" stroke="#9ea8bd" stroke-width="1.1"/></svg>
</div>
<!-- card 4 -->
<div class="card" style="left:688px">
 <div class="img" style="background:#3b2878">
  <svg style="left:0;top:0" width="196" height="132" viewBox="0 0 196 132">
   <defs><clipPath id="c4"><rect x="46.5" y="0" width="102.2" height="132"/></clipPath></defs>
   <g clip-path="url(#c4)">
   <rect x="46.5" y="0" width="102.2" height="132" fill="#4a3c98"/>
   <rect x="46.5" y="0" width="102.2" height="12" fill="#1e1c58"/>
   <path d="M120 0 H148.7 V12 L128 10Z" fill="#7a78c8"/>
   <path d="M46.5 10.8 L128 2.7 L130 7.3 L46.5 14.3Z" fill="#3ec0c8"/>
   <rect x="46.5" y="14.3" width="102.2" height="18" fill="#33307a"/>
   <path d="M46.5 31.8 H112 V36.5 H46.5Z" fill="#3aa8c8"/>
   <rect x="46.5" y="36.5" width="102.2" height="30" fill="#4c3ea0"/>
   <circle cx="50" cy="60" r="2.5" fill="#c05a5a"/><circle cx="54" cy="66" r="2" fill="#d07050"/><circle cx="100" cy="56" r="2" fill="#9070b0"/>
   <path d="M96 66 C100 60 108 60 112 64 L116 100 L100 104Z" fill="#6a7ad8"/>
   <path d="M100 60 C100 54 104 52 108 52 C112 52 114 56 113 62 C112 66 110 68 107 68 C103 68 100 65 100 60Z" fill="#9a88c0"/>
   <path d="M46.5 132 V66 C52 58 62 56 70 56 C84 58 94 66 98 90 L100 132Z" fill="#2c3488"/>
   <path d="M63 44 C63 36 68 33 75 33 C83 33 88 38 87.5 47 C87 56 83 62 76 62 C68 62 63 54 63 44Z" fill="#ac94c4"/>
   <path d="M54.8 40 C54 30 60 21.5 72 21.3 C82 21.2 90 25 92 31 L96 34 L90 40 L74 39 L58 46Z" fill="#3658e6"/>
   <path d="M62 30 L80 24 M64 34 L82 28" stroke="#e0e8ff" stroke-width="1.4"/>
   <ellipse cx="61" cy="82" rx="3.5" ry="2.5" fill="#c0a040"/>
   <path d="M54 100 C55 92 62 90 68 94 L74 110 L70 121 L58 120Z" fill="#a890c0"/>
   <path d="M60 94 L70 88 L74 96 L66 100Z" fill="#1a1a30"/>
   <ellipse cx="130" cy="44" rx="22" ry="42" fill="#3a2e72"/>
   <ellipse cx="128" cy="36" rx="14" ry="24" fill="#4a3e88" opacity=".6"/>
   <path d="M64 132 C68 110 84 94 110 86 L148.7 82 V132Z" fill="#2a2060"/>
   </g>
  </svg>
 </div>
 <div class="t fn" style="transform:scaleX(.975)">presto/2019/01...c89fe-IMG_9279.jpg</div>
 <div class="t dom">www.gannett-cdn.com</div><svg style="left:7px;top:154.8px" width="9" height="9" viewBox="0 0 9 9"><path d="M3.6 5.4L5.4 3.6M4.3 2.2L5.2 1.3C6 .5 7.2 .5 8 1.3C8.6 2 8.6 3 8 3.7L7 4.7M4.7 6.8L3.8 7.7C3 8.5 1.8 8.5 1 7.7C.4 7 .4 6 1 5.3L2 4.3" fill="none" stroke="#9ea8bd" stroke-width="1.1"/></svg>
</div>
<!-- card 5 -->
<div class="card" style="left:912px">
 <div class="img" style="background:#8a6d3a">
  <div class="a" style="left:0;top:10.3px;width:196px;height:110.7px;background:linear-gradient(90deg,#7a6448 0%,#3a2c1c 10%,#140e08 22%,#1a120a 45%,#0a0806 70%,#0e0a06 100%)"></div>
  <svg style="left:0;top:0" width="196" height="132" viewBox="0 0 196 132">
   <path d="M20 40 C25 25 40 22 50 30 M88 32 C100 18 120 18 130 30 C135 40 150 40 160 30 M150 22 C165 15 185 18 196 30" fill="none" stroke="#8a6a30" stroke-width="2.2"/>
   <path d="M22 45 V110 M102 45 V70" stroke="#5a4428" stroke-width="3"/>
   <path d="M40 38 C38 20 46 10 58 10 C72 10 80 20 80 36 L84 72 L44 72 C40 60 40 48 40 38Z" fill="#4e2c1c"/>
   <ellipse cx="60" cy="38" rx="11" ry="15" fill="#d4a48a"/>
   <path d="M48 30 C52 22 66 20 72 30 C68 26 56 26 48 30Z" fill="#4e2c1c"/>
   <path d="M4 121 L10 82 C16 68 30 62 44 62 L70 66 L72 121Z" fill="#2b95cc"/>
   <path d="M4 110 C10 98 24 88 40 86 L50 90 C38 96 26 106 16 118Z" fill="#d6a288"/>
   <path d="M52 67 L184 27 L196 28 L196 95 L57 121Z" fill="#2a3482"/>
   <path d="M58 72 L180 35 L190 90 L64 116Z" fill="none" stroke="#4f98df" stroke-width="1.2"/>
   <path d="M62 86 L80 79 M63 91 L81 84 M64 96 L82 89" stroke="#c8d8f0" stroke-width="1.8"/>
   <text x="80" y="99" font-family="Liberation Sans" font-size="12.5" fill="#fff" transform="rotate(-16 80 99)" textLength="108" lengthAdjust="spacingAndGlyphs">TAX CUTS <tspan font-size="9" fill="#6a9ad8">&amp;</tspan> JOBS ACT</text>
   <path d="M86 113 L168 92" stroke="#7f8cc0" stroke-width="1.4" stroke-dasharray="14 3"/>
   
  </svg>
 </div>
 <div class="t fn" style="transform:scaleX(.97)">static.foxbusi.../Tax-reform-GOP.jpg</div>
 <div class="t dom">a57.foxnews.com</div><svg style="left:7px;top:154.8px" width="9" height="9" viewBox="0 0 9 9"><path d="M3.6 5.4L5.4 3.6M4.3 2.2L5.2 1.3C6 .5 7.2 .5 8 1.3C8.6 2 8.6 3 8 3.7L7 4.7M4.7 6.8L3.8 7.7C3 8.5 1.8 8.5 1 7.7C.4 7 .4 6 1 5.3L2 4.3" fill="none" stroke="#9ea8bd" stroke-width="1.1"/></svg>
</div>
<div class="new" style="left:10px"></div><div class="t newt" style="left:17.2px;transform:scaleX(.924)">New</div>
<div class="new" style="left:234px"></div><div class="t newt" style="left:241.2px;transform:scaleX(.924)">New</div>
<div class="new" style="left:458px"></div><div class="t newt" style="left:465.2px;transform:scaleX(.924)">New</div>
<div class="new" style="left:682px"></div><div class="t newt" style="left:689.2px;transform:scaleX(.924)">New</div>
<div class="new" style="left:906px"></div><div class="t newt" style="left:913.2px;transform:scaleX(.924)">New</div>

<div class="a" style="left:0;top:580px;width:1200px;height:2px;background:#1f2e52"></div>
<div class="a" style="left:0;top:582px;width:1200px;height:2px;background:#eef1f5"></div>

</body></html>
